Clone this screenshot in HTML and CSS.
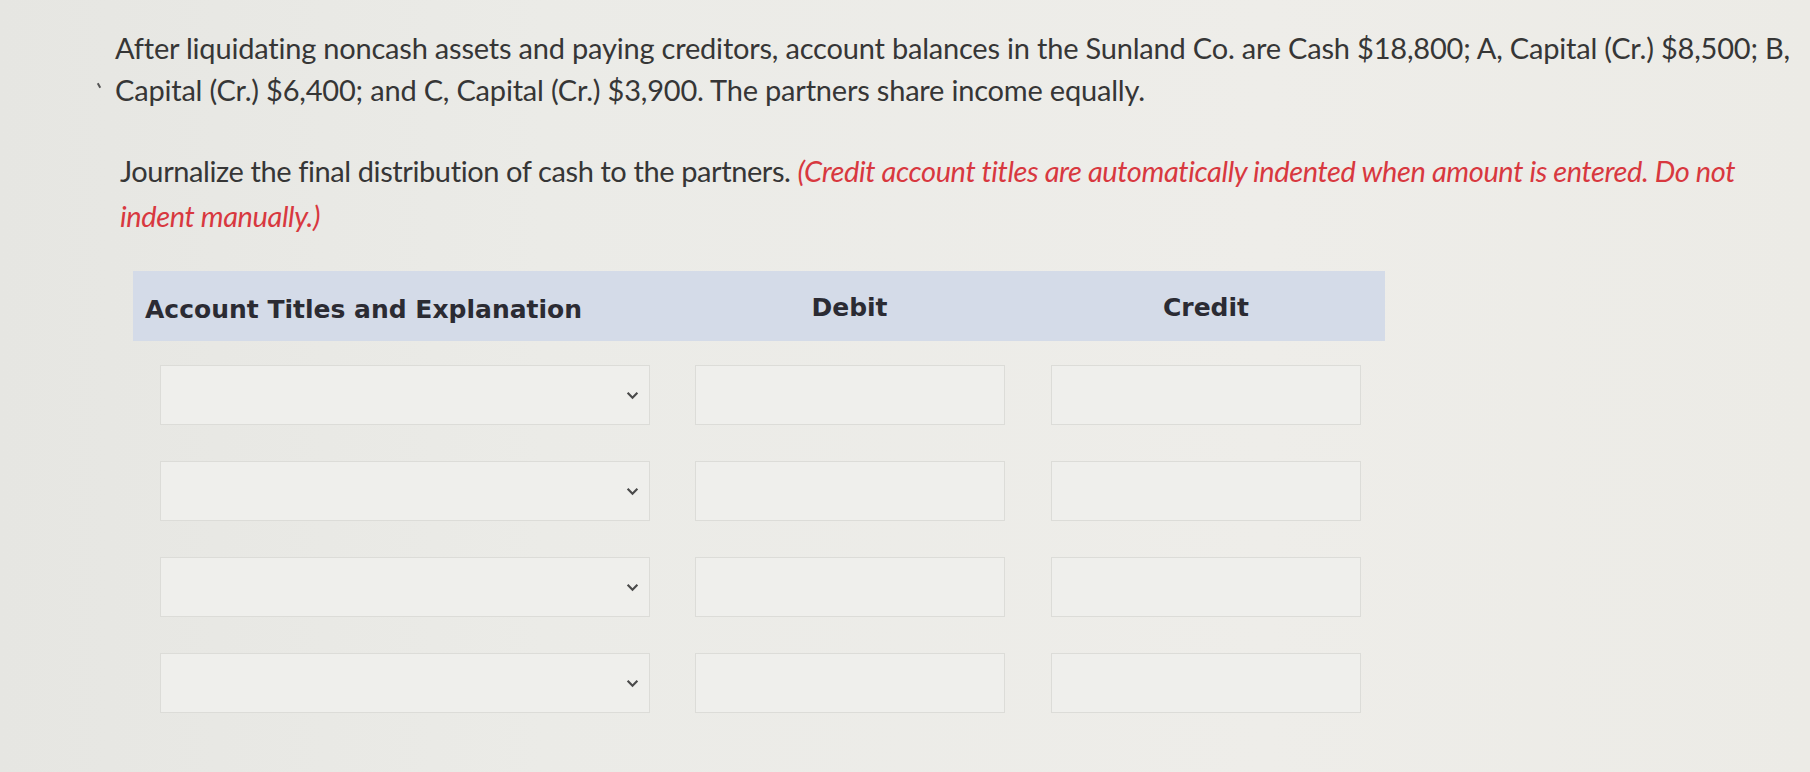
FILE: index.html
```html
<!DOCTYPE html>
<html>
<head>
<meta charset="utf-8">
<link rel="stylesheet" href="styles.css">
</head>
<body>
<div class="page">
  <p class="intro">After liquidating noncash assets and paying creditors, account balances in the Sunland Co. are Cash $18,800; A, Capital (Cr.) $8,500; B, Capital (Cr.) $6,400; and C, Capital (Cr.) $3,900. The partners share income equally.</p>
  <p class="task">Journalize the final distribution of cash to the partners. <em class="note">(Credit account titles are automatically indented when amount is entered. Do not indent manually.)</em></p>
  <div class="journal">
    <div class="head">
      <div class="h-acct">Account Titles and Explanation</div>
      <div class="h-amt">Debit</div>
      <div class="h-amt">Credit</div>
    </div>
    <div class="row">
      <div class="c-acct"><div class="select"><svg class="chev" viewBox="0 0 12 8"><path d="M1.5 1.5 L6 6 L10.5 1.5" fill="none" stroke="#4a4a4a" stroke-width="2"/></svg></div></div>
      <div class="c-amt"><div class="input"></div></div>
      <div class="c-amt"><div class="input"></div></div>
    </div>
    <div class="row">
      <div class="c-acct"><div class="select"><svg class="chev" viewBox="0 0 12 8"><path d="M1.5 1.5 L6 6 L10.5 1.5" fill="none" stroke="#4a4a4a" stroke-width="2"/></svg></div></div>
      <div class="c-amt"><div class="input"></div></div>
      <div class="c-amt"><div class="input"></div></div>
    </div>
    <div class="row">
      <div class="c-acct"><div class="select"><svg class="chev" viewBox="0 0 12 8"><path d="M1.5 1.5 L6 6 L10.5 1.5" fill="none" stroke="#4a4a4a" stroke-width="2"/></svg></div></div>
      <div class="c-amt"><div class="input"></div></div>
      <div class="c-amt"><div class="input"></div></div>
    </div>
    <div class="row">
      <div class="c-acct"><div class="select"><svg class="chev" viewBox="0 0 12 8"><path d="M1.5 1.5 L6 6 L10.5 1.5" fill="none" stroke="#4a4a4a" stroke-width="2"/></svg></div></div>
      <div class="c-amt"><div class="input"></div></div>
      <div class="c-amt"><div class="input"></div></div>
    </div>
  </div>
</div>
</body>
</html>
```
FILE: styles.css
```css
html, body {
  margin: 0;
  padding: 0;
}
body {
  width: 1810px;
  height: 772px;
  overflow: hidden;
  background: linear-gradient(90deg, #e6e6e2 0%, #ebebe7 30%, #eeede9 70%, #ecebe6 100%);
  font-family: Lato, "Open Sans", sans-serif;
  color: #363636;
}
.page {
  padding: 27px 0 0 115px;
}
.intro {
  position: relative;
  margin: 0;
  width: 1700px;
  font-size: 29px;
  line-height: 42px;
  letter-spacing: -0.2px;
}
.intro::before {
  content: "";
  position: absolute;
  left: -17px;
  top: 56px;
  width: 2px;
  height: 5px;
  background: #555;
  transform: rotate(-30deg);
}
.task {
  margin: 37px 0 0 5px;
  width: 1650px;
  font-size: 29px;
  line-height: 45px;
  letter-spacing: -0.4px;
}
.note {
  color: #d8383f;
  font-style: italic;
}
.journal {
  margin: 33px 0 0 18px;
  width: 1252px;
}
.head {
  display: grid;
  grid-template-columns: 539px 355px 358px;
  height: 70px;
  align-items: center;
  background: #d4dbe8;
  font-family: "DejaVu Sans", Verdana, sans-serif;
  font-weight: bold;
  font-size: 25px;
  color: #2b2b33;
}
.h-acct {
  padding-left: 12px;
  padding-top: 6px;
}
.h-amt {
  text-align: center;
  padding-top: 2px;
}
.row {
  display: grid;
  grid-template-columns: 539px 355px 358px;
  margin-top: 24px;
}
.row + .row {
  margin-top: 36px;
}
.c-acct {
  padding-left: 27px;
}
.c-amt {
  display: flex;
  justify-content: center;
}
.select {
  width: 490px;
  height: 60px;
  box-sizing: border-box;
  border: 1.5px solid #dcdcd8;
  background: #efefec;
  display: flex;
  align-items: center;
  justify-content: flex-end;
  padding-right: 10px;
}
.chev {
  width: 13px;
  height: 9px;
}
.input {
  width: 310px;
  height: 60px;
  box-sizing: border-box;
  border: 1.5px solid #dcdcd8;
  background: #efefec;
}
```
